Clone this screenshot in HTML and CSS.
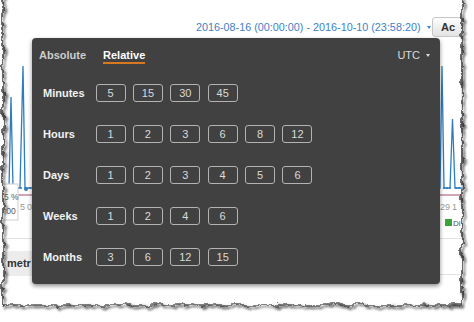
FILE: index.html
```html
<!DOCTYPE html>
<html>
<head>
<meta charset="utf-8">
<link rel="stylesheet" href="styles.css">
</head>
<body>
<div class="page">
  <div class="toolbar">
    <span class="range">2016-08-16 (00:00:00) - 2016-10-10 (23:58:20)<i class="caret"></i></span>
    <button class="actions">Ac</button>
  </div>

  <svg class="chart" width="474" height="200" viewBox="0 38 474 200">
    <line x1="4" y1="195" x2="470" y2="195" stroke="#a94a6c" stroke-width="1"/>
    <polyline fill="none" stroke="#2f7dbf" stroke-width="1.3" points="2,188 9,188 11,97 13,188 20,188 23,66 25,188 40,188"/>
    <g fill="#2f7dbf">
      <circle cx="5" cy="188" r="1.1"/><circle cx="9" cy="188" r="1.1"/><circle cx="13" cy="188" r="1.1"/>
      <circle cx="17" cy="188" r="1.1"/><circle cx="21" cy="188" r="1.1"/><circle cx="26" cy="189" r="2"/>
      <circle cx="30" cy="188" r="1.1"/>
    </g>
    <polyline fill="none" stroke="#2f7dbf" stroke-width="1.3" points="430,188 440,188 442,66 444,188 450,188 452.5,119 455,188 470,188"/>
    <g fill="#2f7dbf">
      <circle cx="444" cy="188" r="1.1"/><circle cx="447" cy="188" r="1.1"/><circle cx="450" cy="188" r="1.1"/>
      <circle cx="456" cy="188" r="1.1"/><circle cx="459" cy="188" r="1.1"/>
    </g>
    <line x1="462" y1="66" x2="462" y2="188" stroke="#b9d3ea" stroke-width="1"/>
    <g font-family="Liberation Sans, Arial, sans-serif" font-size="9" fill="#9a9a9a">
      <text x="20" y="210">5</text><text x="27" y="210">0</text>
      <text x="440" y="210">29</text><text x="452" y="210">1</text>
    </g>
    <rect x="-4" y="184" width="22" height="36" fill="#fff" stroke="#cfcfcf" stroke-width="1"/>
    <g font-family="Liberation Sans, Arial, sans-serif" font-size="8.5" fill="#555">
      <text x="4" y="200">5 %</text>
      <text x="4" y="214">:00</text>
    </g>
    <rect x="445" y="219" width="7" height="7" fill="#3aa43a"/>
    <text x="453" y="226" font-family="Liberation Sans, Arial, sans-serif" font-size="8" fill="#555">Di</text>
  </svg>

  <div class="tablebar"><span class="metric-tab">metr</span></div>

  <div class="popover">
    <div class="tabs">
      <span class="tab-link">Absolute</span>
      <span class="tab-link active">Relative</span>
      <span class="tz">UTC<i class="caret light"></i></span>
    </div>
    <div class="rows">
      <div class="row">
        <span class="label">Minutes</span>
        <div class="opts"><span class="opt">5</span><span class="opt">15</span><span class="opt">30</span><span class="opt">45</span></div>
      </div>
      <div class="row">
        <span class="label">Hours</span>
        <div class="opts"><span class="opt">1</span><span class="opt">2</span><span class="opt">3</span><span class="opt">6</span><span class="opt">8</span><span class="opt">12</span></div>
      </div>
      <div class="row">
        <span class="label">Days</span>
        <div class="opts"><span class="opt">1</span><span class="opt">2</span><span class="opt">3</span><span class="opt">4</span><span class="opt">5</span><span class="opt">6</span></div>
      </div>
      <div class="row">
        <span class="label">Weeks</span>
        <div class="opts"><span class="opt">1</span><span class="opt">2</span><span class="opt">4</span><span class="opt">6</span></div>
      </div>
      <div class="row">
        <span class="label">Months</span>
        <div class="opts"><span class="opt">3</span><span class="opt">6</span><span class="opt">12</span><span class="opt">15</span></div>
      </div>
    </div>
  </div>

  <svg class="torn" width="474" height="322" viewBox="0 0 474 322">
    <defs>
      <filter id="rough" filterUnits="userSpaceOnUse" x="-40" y="-40" width="560" height="410">
        <feTurbulence type="fractalNoise" baseFrequency="0.11" numOctaves="3" seed="7" result="n"/>
        <feDisplacementMap in="SourceGraphic" in2="n" scale="8" xChannelSelector="R" yChannelSelector="G"/>
      </filter>
      <filter id="roughShadow" filterUnits="userSpaceOnUse" x="-40" y="-40" width="560" height="410">
        <feTurbulence type="fractalNoise" baseFrequency="0.11" numOctaves="3" seed="7" result="n"/>
        <feDisplacementMap in="SourceGraphic" in2="n" scale="8" xChannelSelector="R" yChannelSelector="G" result="d"/>
        <feGaussianBlur in="d" stdDeviation="1"/>
      </filter>
    </defs>
    <path d="M-30,-30H510V360H-30Z M3,-20V305H462V-20Z" fill="#fff" fill-rule="evenodd" filter="url(#rough)"/>
    <g transform="translate(2,2)">
      <path d="M3,-20V305H462V-20" fill="none" stroke="#6f6f6f" stroke-width="2.4" filter="url(#roughShadow)"/>
    </g>
    <path d="M3,-20V305H462V-20" fill="none" stroke="#111" stroke-width="1.2" filter="url(#rough)"/>
  </svg>
</div>
</body>
</html>
```

FILE: styles.css
```css
html, body {
  margin: 0;
  padding: 0;
  background: #fff;
}

.page {
  position: relative;
  width: 474px;
  height: 322px;
  overflow: hidden;
  font-family: "Liberation Sans", Arial, sans-serif;
  background: #fff;
}

.toolbar {
  display: flex;
  align-items: flex-start;
  height: 38px;
  padding: 17px 0 0 196px;
  box-sizing: border-box;
  white-space: nowrap;
}

.range {
  display: flex;
  align-items: center;
  width: 245px;
  height: 20px;
  font-size: 10.8px;
  color: #3d80c6;
}

.caret {
  display: inline-block;
  width: 0;
  height: 0;
  margin-left: 6px;
  border-left: 2.5px solid transparent;
  border-right: 2.5px solid transparent;
  border-top: 3px solid #3d80c6;
}

.caret.light {
  border-top-color: #ddd;
  margin-left: 6px;
}

.actions {
  flex: none;
  width: 42px;
  height: 20px;
  padding: 0 0 0 8px;
  margin: 0;
  text-align: left;
  border: 1px solid #c6c6c6;
  border-radius: 3px;
  background: linear-gradient(#fdfdfd, #e3e3e3);
  font-family: "Liberation Sans", Arial, sans-serif;
  font-weight: bold;
  font-size: 11px;
  color: #333;
}

.chart {
  display: block;
}

.tablebar {
  height: 35px;
  border-top: 1px solid #e2e2e2;
  border-bottom: 1px solid #e2e2e2;
  box-sizing: content-box;
}

.metric-tab {
  display: block;
  width: 60px;
  height: 25px;
  margin-top: 12px;
  padding-left: 7px;
  background: #ececec;
  font-size: 11px;
  font-weight: bold;
  line-height: 25px;
  color: #333;
}

.popover {
  position: absolute;
  left: 32px;
  top: 38px;
  width: 408px;
  height: 246px;
  box-sizing: border-box;
  background: #414141;
  border-radius: 4px;
  box-shadow: 0 2px 4px rgba(0, 0, 0, 0.45);
}

.tabs {
  display: flex;
  align-items: flex-start;
  padding: 10px 10px 0 7px;
}

.tab-link {
  font-size: 11px;
  font-weight: bold;
  line-height: 14px;
  color: #cdcdcd;
  margin-right: 17px;
  border-bottom: 2px solid transparent;
}

.tab-link.active {
  color: #fff;
  border-bottom-color: #d77a1f;
}

.tz {
  margin-left: auto;
  display: flex;
  align-items: center;
  font-size: 11px;
  line-height: 14px;
  color: #dcdcdc;
}

.rows {
  display: flex;
  flex-direction: column;
  gap: 23.1px;
  margin-top: 19.5px;
}

.row {
  display: flex;
  align-items: center;
  height: 18px;
  padding-left: 11px;
}

.label {
  width: 52.5px;
  flex: none;
  font-size: 11px;
  font-weight: bold;
  color: #f2f2f2;
}

.opts {
  display: flex;
  gap: 7.4px;
}

.opt {
  display: flex;
  align-items: center;
  justify-content: center;
  width: 30px;
  height: 18px;
  box-sizing: border-box;
  border: 1px solid #b3b3b3;
  border-radius: 3px;
  font-size: 11px;
  color: #dadada;
}

.torn {
  position: absolute;
  left: 0;
  top: 0;
  pointer-events: none;
}
```
